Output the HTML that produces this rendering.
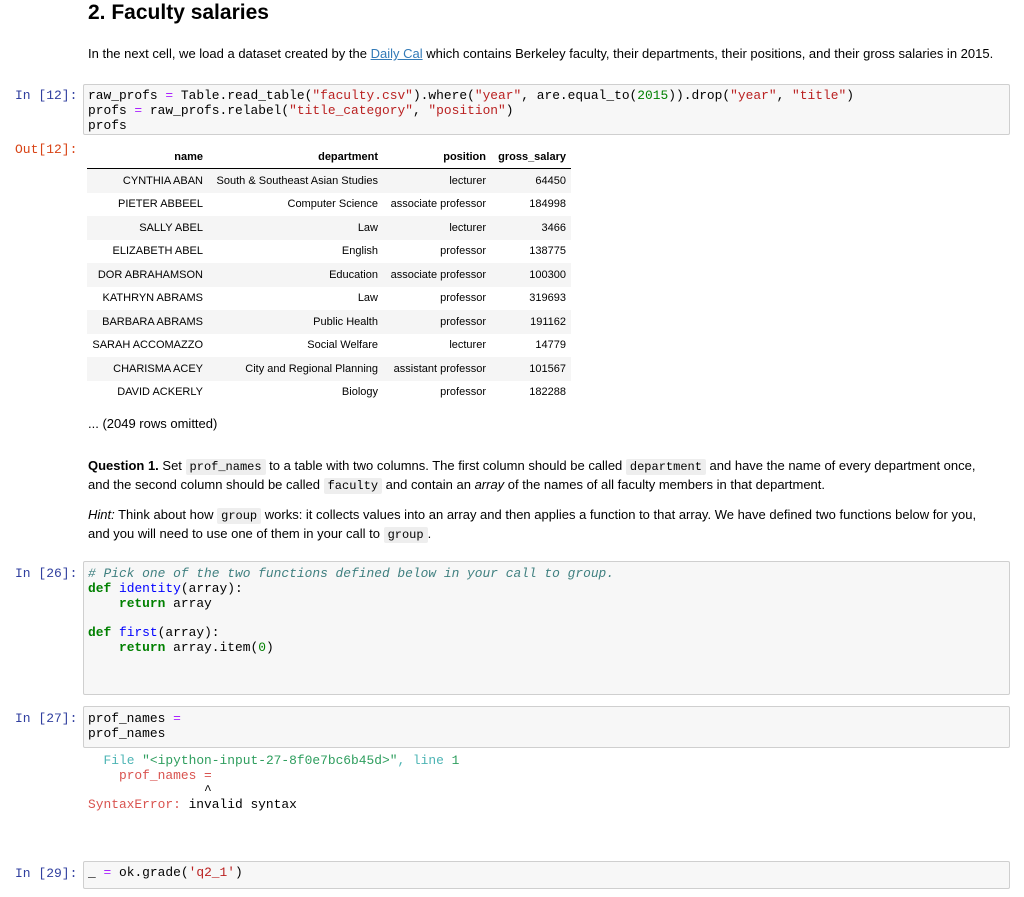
<!DOCTYPE html>
<html><head><meta charset="utf-8"><style>
body{margin:0;width:1024px;height:897px;background:#fff;position:relative;overflow:hidden;font-family:"Liberation Sans",sans-serif;color:#000}
.a{position:absolute;white-space:pre}
.m{font-family:"Liberation Mono",monospace;font-size:12.9px;line-height:14.8px}
.p{font-family:"Liberation Mono",monospace;font-size:13px;color:#303f9f;left:15px}
.o{color:#d84315}
.box{position:absolute;left:83px;width:925px;background:#f7f7f7;border:1px solid #cfcfcf;border-radius:2px}
.t{font-size:13px;line-height:18px}
.s{color:#ba2121}.k{color:#008000;font-weight:bold}.op{color:#aa22ff}.f{color:#0000ff}.c{color:#408080;font-style:italic}.n{color:#008000}
code{font-family:"Liberation Mono",monospace;font-size:12px;background:#eee;padding:1px 4px;border-radius:2px}
table{position:absolute;left:87px;top:145px;border-collapse:collapse;font-size:11px;table-layout:fixed;width:484px}
td,th{text-align:right;padding:0 5px;height:23.5px;white-space:nowrap}
th{font-weight:bold;border-bottom:1px solid #000;height:23px}
tr:nth-child(even) td{background:#f5f5f5}
</style></head><body>
<div class="a" style="left:88px;top:1px;font-size:21px;font-weight:bold">2. Faculty salaries</div>
<div class="a t" style="left:88px;top:45px">In the next cell, we load a dataset created by the <span style="color:#337ab7;text-decoration:underline">Daily Cal</span> which contains Berkeley faculty, their departments, their positions, and their gross salaries in 2015.</div>

<div class="a p" style="top:88px">In [12]:</div>
<div class="box" style="top:84px;height:49px"></div>
<div class="a m" style="left:88px;top:89px">raw_profs <span class="op">=</span> Table.read_table(<span class="s">"faculty.csv"</span>).where(<span class="s">"year"</span>, are.equal_to(<span class="n">2015</span>)).drop(<span class="s">"year"</span>, <span class="s">"title"</span>)
profs <span class="op">=</span> raw_profs.relabel(<span class="s">"title_category"</span>, <span class="s">"position"</span>)
profs</div>
<div class="a p o" style="top:142px">Out[12]:</div>
<table>
<colgroup><col style="width:121px"><col style="width:175px"><col style="width:108px"><col style="width:80px"></colgroup>
<tr><th>name</th><th>department</th><th>position</th><th>gross_salary</th></tr>
<tr><td>CYNTHIA ABAN</td><td>South &amp; Southeast Asian Studies</td><td>lecturer</td><td>64450</td></tr>
<tr><td>PIETER ABBEEL</td><td>Computer Science</td><td>associate professor</td><td>184998</td></tr>
<tr><td>SALLY ABEL</td><td>Law</td><td>lecturer</td><td>3466</td></tr>
<tr><td>ELIZABETH ABEL</td><td>English</td><td>professor</td><td>138775</td></tr>
<tr><td>DOR ABRAHAMSON</td><td>Education</td><td>associate professor</td><td>100300</td></tr>
<tr><td>KATHRYN ABRAMS</td><td>Law</td><td>professor</td><td>319693</td></tr>
<tr><td>BARBARA ABRAMS</td><td>Public Health</td><td>professor</td><td>191162</td></tr>
<tr><td>SARAH ACCOMAZZO</td><td>Social Welfare</td><td>lecturer</td><td>14779</td></tr>
<tr><td>CHARISMA ACEY</td><td>City and Regional Planning</td><td>assistant professor</td><td>101567</td></tr>
<tr><td>DAVID ACKERLY</td><td>Biology</td><td>professor</td><td>182288</td></tr>
</table>
<div class="a t" style="left:88px;top:415px">... (2049 rows omitted)</div>

<div class="a t" style="left:88px;top:457px"><b>Question 1.</b> Set <code>prof_names</code> to a table with two columns. The first column should be called <code>department</code> and have the name of every department once,
and the second column should be called <code>faculty</code> and contain an <i>array</i> of the names of all faculty members in that department.</div>
<div class="a t" style="left:88px;top:506px"><i>Hint:</i> Think about how <code>group</code> works: it collects values into an array and then applies a function to that array. We have defined two functions below for you,
and you will need to use one of them in your call to <code>group</code>.</div>

<div class="a p" style="top:566px">In [26]:</div>
<div class="box" style="top:561px;height:132px"></div>
<div class="a m" style="left:88px;top:567px"><span class="c"># Pick one of the two functions defined below in your call to group.</span>
<span class="k">def</span> <span class="f">identity</span>(array):
    <span class="k">return</span> array

<span class="k">def</span> <span class="f">first</span>(array):
    <span class="k">return</span> array.item(<span class="n">0</span>)</div>

<div class="a p" style="top:711px">In [27]:</div>
<div class="box" style="top:706px;height:40px"></div>
<div class="a m" style="left:88px;top:712px">prof_names <span class="op">=</span>
prof_names</div>
<div class="a m" style="left:88px;top:754px">  <span style="color:#4cb4b4">File </span><span style="color:#2e9e5e">"&lt;ipython-input-27-8f0e7bc6b45d&gt;"</span><span style="color:#4cb4b4">, line </span><span style="color:#2e9e5e">1</span>
    <span style="color:#d9534f">prof_names =</span>
               ^
<span style="color:#d9534f">SyntaxError:</span> invalid syntax</div>

<div class="a p" style="top:866px">In [29]:</div>
<div class="box" style="top:861px;height:26px"></div>
<div class="a m" style="left:88px;top:866px">_ <span class="op">=</span> ok.grade(<span class="s">'q2_1'</span>)</div>
</body></html>
